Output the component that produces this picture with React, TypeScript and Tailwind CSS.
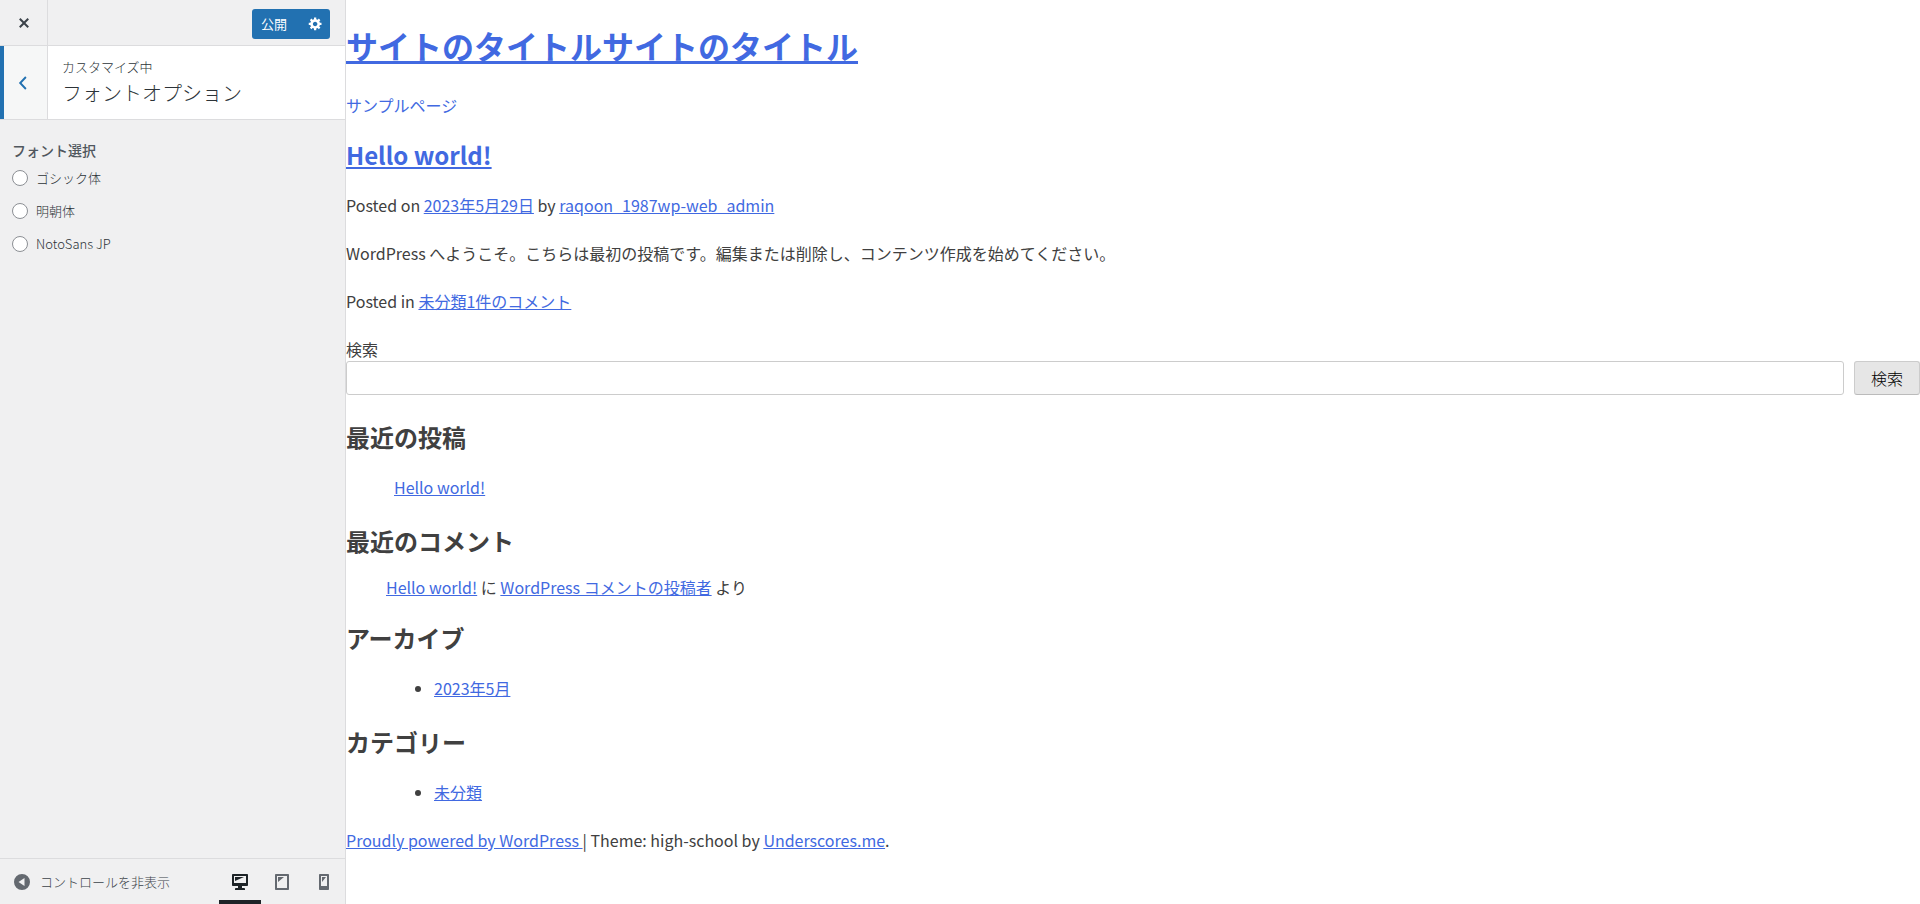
import React, { useState } from 'react';

const linkStyle = 'text-[#4169e1] underline';

function Link({ children, className = linkStyle }: { children: React.ReactNode; className?: string }) {
  return (
    <a href="#" className={className}>
      {children}
    </a>
  );
}

function Icon({ d, className = 'size-5' }: { d: string; className?: string }) {
  return (
    <svg viewBox="0 0 20 20" fill="currentColor" fillRule="evenodd" aria-hidden="true" className={className}>
      <path d={d} />
    </svg>
  );
}

const icons = {
  close: 'M14.95 6.46L11.41 10l3.54 3.54-1.41 1.41L10 11.42l-3.53 3.53-1.42-1.42L8.58 10 5.05 6.47l1.42-1.42L10 8.58l3.54-3.53z',
  back: 'M13.2 3.5L7 10l6.2 6.5-1.7 1.8L3.6 10l7.9-8.3z',
  gear: 'M18 12h-2.18c-.17.7-.44 1.35-.81 1.93l1.54 1.54-2.1 2.1-1.54-1.54c-.58.36-1.23.63-1.91.79V19H8v-2.18c-.68-.16-1.33-.43-1.91-.79l-1.54 1.54-2.12-2.12 1.54-1.54c-.36-.58-.63-1.23-.79-1.91H1V9.03h2.17c.16-.7.44-1.35.8-1.94L2.43 5.55l2.1-2.1 1.54 1.54c.58-.37 1.24-.64 1.93-.81V2h3v2.18c.68.16 1.33.43 1.91.79l1.54-1.54 2.12 2.12-1.54 1.54c.36.59.64 1.24.8 1.94H18V12zm-8.5 1.5c1.66 0 3-1.34 3-3s-1.34-3-3-3-3 1.34-3 3 1.34 3 3 3z',
  collapse: 'M10 2a8 8 0 1 0 0 16 8 8 0 0 0 0-16zM12.5 6v8L6.5 10z',
  desktop: 'M3 2h14c.55 0 1 .45 1 1v10c0 .55-.45 1-1 1h-5v2h2c.55 0 1 .45 1 1v1H5v-1c0-.55.45-1 1-1h2v-2H3c-.55 0-1-.45-1-1V3c0-.55.45-1 1-1zm13 9V4H4v7h12zM5 5h9L5 9V5z',
  tablet: 'M4 2h12c.55 0 1 .45 1 1v14c0 .55-.45 1-1 1H4c-.55 0-1-.45-1-1V3c0-.55.45-1 1-1zm11 14V4H5v12h10zM6 5h6l-6 5V5z',
  mobile: 'M6 2h8c.55 0 1 .45 1 1v14c0 .55-.45 1-1 1H6c-.55 0-1-.45-1-1V3c0-.55.45-1 1-1zm7 12V4H7v10h6zM8 5h4l-4 5V5z',
};

function Controls() {
  const [font, setFont] = useState('');
  const [device, setDevice] = useState('desktop');
  const fonts = ['ゴシック体', '明朝体', 'NotoSans JP'];
  const devices = [
    { id: 'desktop', label: 'デスクトップ', icon: icons.desktop },
    { id: 'tablet', label: 'タブレット', icon: icons.tablet },
    { id: 'mobile', label: 'モバイル', icon: icons.mobile },
  ];
  return (
    <aside className="flex w-[346px] shrink-0 flex-col border-r border-[#dcdcde] bg-[#f0f0f1] text-[13px] text-[#2c3338]">
      <header className="flex h-[46px] items-center justify-between border-b border-[#dcdcde] pr-[15px]">
        <button type="button" aria-label="閉じる" className="flex h-full w-12 items-center justify-center border-r border-[#dcdcde] text-[#3c434a]">
          <Icon d={icons.close} />
        </button>
        <div className="mt-0.5 flex h-[30px] overflow-hidden rounded-[3px] bg-[#2271b1] text-white">
          <button type="button" className="w-12 pr-1">公開</button>
          <button type="button" aria-label="公開設定" className="flex w-[30px] items-center justify-center">
            <Icon d={icons.gear} className="size-[15px]" />
          </button>
        </div>
      </header>
      <div className="flex h-[74px] border-b border-[#dcdcde] bg-white">
        <button type="button" aria-label="戻る" className="flex w-12 items-center justify-center border-r border-l-4 border-r-[#dcdcde] border-l-[#2271b1] bg-[#f6f7f7] pr-1 text-[#2271b1]">
          <Icon d={icons.back} className="size-4" />
        </button>
        <h3 className="flex flex-col justify-center pl-[14px] font-light">
          <span className="leading-5">カスタマイズ中</span>
          <span className="text-xl leading-8">フォントオプション</span>
        </h3>
      </div>
      <div className="flex-1 px-3 pt-[18px]">
        <fieldset>
          <legend className="text-sm leading-6 font-medium text-[#50575e]">フォント選択</legend>
          <div className="flex flex-col gap-[9px] pt-1">
            {fonts.map((name) => (
              <label key={name} className="flex h-6 items-center gap-2 font-light">
                <input
                  type="radio"
                  name="font"
                  checked={font === name}
                  onChange={() => setFont(name)}
                  className="size-4 appearance-none rounded-full border border-[#8c8f94] bg-white checked:border-4 checked:border-[#2271b1]"
                />
                {name}
              </label>
            ))}
          </div>
        </fieldset>
      </div>
      <footer className="flex h-[46px] justify-between border-t border-[#dcdcde] text-[#646970]">
        <button type="button" className="flex items-center gap-2 pl-3 font-light">
          <Icon d={icons.collapse} />
          <span className="text-[#3c434a]">コントロールを非表示</span>
        </button>
        <div className="flex">
          {devices.map(({ id, label, icon }) => (
            <button
              key={id}
              type="button"
              aria-label={label}
              onClick={() => setDevice(id)}
              className={
                device === id
                  ? 'flex w-[42px] items-center justify-center border-b-4 border-[#1d2327] pt-1 text-[#1d2327]'
                  : 'flex w-[42px] items-center justify-center'
              }
            >
              <Icon d={icon} />
            </button>
          ))}
        </div>
      </footer>
    </aside>
  );
}

function SectionTitle({ children }: { children: React.ReactNode }) {
  return <h2 className="mt-6 mb-5 text-2xl leading-9 font-bold">{children}</h2>;
}

function Preview() {
  return (
    <div className="min-w-0 flex-1 bg-white text-base leading-6 text-[#404040]">
      <header>
        <h1 className="mt-[21px] mb-6 text-[32px] leading-[48px] font-bold">
          <Link>サイトのタイトルサイトのタイトル</Link>
        </h1>
        <nav>
          <Link className="text-[#4169e1]">サンプルページ</Link>
        </nav>
      </header>
      <main>
        <h2 className="my-5 text-2xl leading-9 font-bold">
          <Link>Hello world!</Link>
        </h2>
        <div>
          Posted on <Link>2023年5月29日</Link> by <Link>raqoon_1987wp-web_admin</Link>
        </div>
        <p className="my-6">WordPress へようこそ。こちらは最初の投稿です。編集または削除し、コンテンツ作成を始めてください。</p>
        <div>
          Posted in <Link>未分類</Link><Link>1件のコメント</Link>
        </div>
      </main>
      <section className="mt-6">
        <form role="search" onSubmit={(e) => e.preventDefault()}>
          <label htmlFor="search" className="block">検索</label>
          <div className="flex gap-[10px]">
            <input id="search" type="search" className="h-[34px] min-w-0 flex-1 rounded-[3px] border border-[#ccc] px-1" />
            <button type="submit" className="rounded-[3px] border border-[#ccc] border-b-[#bbb] bg-[#e6e6e6] px-4 font-light text-black">検索</button>
          </div>
        </form>
        <SectionTitle>最近の投稿</SectionTitle>
        <ul className="pl-12">
          <li><Link>Hello world!</Link></li>
        </ul>
        <SectionTitle>最近のコメント</SectionTitle>
        <ol className="-mt-1 -mb-[3px] pl-10">
          <li>
            <Link>Hello world!</Link> に <Link>WordPress コメントの投稿者</Link> より
          </li>
        </ol>
        <SectionTitle>アーカイブ</SectionTitle>
        <ul className="list-disc pl-[88px]">
          <li><Link>2023年5月</Link></li>
        </ul>
        <SectionTitle>カテゴリー</SectionTitle>
        <ul className="list-disc pl-[88px]">
          <li><Link>未分類</Link></li>
        </ul>
      </section>
      <footer className="mt-6">
        <Link>Proudly powered by WordPress </Link>| Theme: high-school by <Link>Underscores.me</Link>.
      </footer>
    </div>
  );
}

export default function App() {
  return (
    <div lang="ja" className="flex min-h-screen font-['Noto_Sans_CJK_JP',sans-serif]">
      <Controls />
      <Preview />
    </div>
  );
}
